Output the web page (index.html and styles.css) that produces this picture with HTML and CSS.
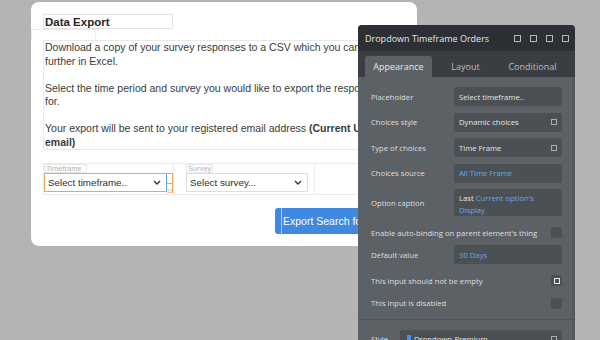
FILE: index.html
```html
<!DOCTYPE html>
<html>
<head>
<meta charset="utf-8">
<link rel="stylesheet" href="styles.css">
</head>
<body>
<div class="card">
  <div class="title-box">Data Export</div>
  <div class="ghost-box"></div>
  <div class="text-box">
    <p>Download a copy of your survey responses to a CSV which you can use further in Excel.</p>
    <p>Select the time period and survey you would like to export the responses for.</p>
    <p>Your export will be sent to your registered email address <b>(Current User's email)</b></p>
  </div>
  <div class="filters">
    <div class="col col-time">
      <div class="field-label lbl-time">Timeframe</div>
      <div class="select select-active">
        <span>Select timeframe..</span>
        <svg class="chev" width="8" height="5" viewBox="0 0 8 5"><path d="M1 1l3 3 3-3" fill="none" stroke="#333" stroke-width="1.4"/></svg>
        <span class="marker"><span class="marker-mid"></span><span class="marker-num">12</span></span>
      </div>
    </div>
    <div class="col col-survey">
      <div class="field-label lbl-survey">Survey</div>
      <div class="select select-survey">
        <span>Select survey...</span>
        <svg class="chev" width="8" height="5" viewBox="0 0 8 5"><path d="M1 1l3 3 3-3" fill="none" stroke="#333" stroke-width="1.4"/></svg>
      </div>
    </div>
    <div class="col col-rest"></div>
  </div>
  <div class="actions">
    <button class="btn"><span class="btn-text">Export Search for Responses</span></button>
  </div>
</div>

<div class="panel">
  <div class="panel-head">
    <span class="panel-title">Dropdown Timeframe Orders</span>
    <span class="head-icons"><i></i><i></i><i></i><i></i></span>
  </div>
  <div class="tabs">
    <div class="tab active">Appearance</div>
    <div class="tab">Layout</div>
    <div class="tab">Conditional</div>
  </div>
  <div class="panel-body">
    <div class="row"><span>Placeholder</span><div class="field">Select timeframe..</div></div>
    <div class="row"><span>Choices style</span><div class="field"><span>Dynamic choices</span><span class="sq"></span></div></div>
    <div class="row"><span>Type of choices</span><div class="field"><span>Time Frame</span><span class="sq"></span></div></div>
    <div class="row"><span>Choices source</span><div class="field"><span class="blue">All Time Frame</span></div></div>
    <div class="row row-caption"><span>Option caption</span><div class="field field-multi">Last <span class="blue">Current option's Display</span></div></div>
    <div class="row row-check"><span>Enable auto-binding on parent element's thing</span><span class="check"></span></div>
    <div class="row"><span>Default value</span><div class="field"><span class="blue">30 Days</span></div></div>
    <div class="row row-check"><span>This input should not be empty</span><span class="check on"><span class="check-mark"></span></span></div>
    <div class="row row-check"><span>This input is disabled</span><span class="check"></span></div>
    <div class="divider"></div>
    <div class="row row-style"><span>Style</span><div class="field field-style"><span class="style-name"><span class="style-swatch"></span>Dropdown-Premium</span><span class="sq"></span></div></div>
  </div>
</div>
</body>
</html>
```

FILE: styles.css
```css
body {
  margin: 0;
  width: 600px;
  height: 340px;
  overflow: hidden;
  background: #b4b4b4;
  position: relative;
  font-family: "Liberation Sans", Arial, sans-serif;
}

.card {
  margin: 2px 0 0 31px;
  width: 386px;
  height: 244px;
  background: #fff;
  border-radius: 8px;
  padding: 12px 0 0 12px;
  box-sizing: border-box;
  color: #3a3a3a;
}

.title-box {
  width: 130px;
  height: 15px;
  box-sizing: border-box;
  border: 1px solid #e4e4e4;
  font-size: 11.5px;
  font-weight: bold;
  color: #262626;
  line-height: 15px;
  padding-left: 1px;
}

.ghost-box {
  margin-left: -12px;
  width: 65px;
  height: 11px;
  box-sizing: border-box;
  border: 1px solid #ececec;
  border-bottom: 0;
}

.text-box {
  width: 374px;
  box-sizing: border-box;
  border: 1px solid #e8e8e8;
  border-right: 0;
  padding-left: 1px;
  font-size: 10.5px;
  line-height: 13.5px;
}

.text-box p {
  margin: 0;
  max-width: 348px;
}

.text-box p + p {
  margin-top: 13.5px;
}

.filters {
  margin-top: 13px;
  width: 374px;
  height: 32px;
  box-sizing: border-box;
  border: 1px solid #ececec;
  border-right: 0;
  display: flex;
}

.col {
  box-sizing: border-box;
  border-right: 1px solid #ececec;
}

.col-time {
  width: 130px;
}

.col-survey {
  width: 141px;
  padding-left: 12px;
}

.col-rest {
  border-right: 0;
}

.field-label {
  box-sizing: border-box;
  height: 9px;
  border: 1px solid #e8e8e8;
  font-size: 7.5px;
  line-height: 8px;
  color: #b3b3b3;
  padding-left: 1px;
}

.lbl-time {
  width: 43px;
}

.lbl-survey {
  width: 27px;
}

.select {
  position: relative;
  width: 123px;
  height: 19px;
  box-sizing: border-box;
  border: 1px solid #dedede;
  font-size: 9.8px;
  color: #2e2e2e;
  padding: 0 5px 0 3px;
  display: flex;
  align-items: center;
  justify-content: space-between;
}

.select-active {
  border-color: #eba463;
  border-right-color: #6b9fda;
}

.select-survey {
  width: 122px;
}

.marker {
  position: absolute;
  left: 122px;
  top: -1px;
  width: 5px;
  height: 19px;
  border-top: 1px solid #f0a35c;
  border-right: 1px solid #f0a35c;
}

.marker-mid {
  position: absolute;
  left: 0;
  right: 0;
  top: 9px;
  height: 1px;
  background: #f0a35c;
}

.marker-num {
  position: absolute;
  left: 0;
  bottom: -1px;
  font-size: 5px;
  line-height: 6px;
  color: #f0a35c;
}

.actions {
  margin-top: 13px;
  padding-left: 232px;
}

.btn {
  display: block;
  width: 140px;
  height: 26px;
  border: 0;
  border-radius: 3px;
  background: #4189e0;
  color: #fff;
  padding: 0 0 0 6px;
  text-align: left;
  font-family: "Liberation Sans", Arial, sans-serif;
  font-size: 10.5px;
}

.btn-text {
  display: block;
  height: 26px;
  line-height: 26px;
  border-left: 1px solid rgba(255, 255, 255, 0.55);
  padding-left: 1px;
  white-space: nowrap;
}

/* Property editor panel */
.panel {
  position: absolute;
  left: 358px;
  top: 25px;
  width: 217px;
  bottom: 0;
  background: #5c6165;
  border-radius: 4px 4px 0 0;
  font-family: "Open Sans", sans-serif;
  display: flex;
  flex-direction: column;
  overflow: hidden;
}

.panel-head {
  height: 26px;
  flex: none;
  background: #2c3034;
  display: flex;
  align-items: center;
  justify-content: space-between;
  padding: 0 6px 0 7px;
  color: #e4e5e6;
  font-size: 9px;
}

.head-icons {
  display: flex;
  gap: 9px;
}

.head-icons i {
  width: 7px;
  height: 7px;
  box-sizing: border-box;
  border: 1px solid #b4b7ba;
}

.tabs {
  height: 26px;
  flex: none;
  background: #3a3e42;
  display: flex;
  align-items: flex-end;
  padding-left: 7px;
}

.tab {
  width: 67px;
  height: 21px;
  text-align: center;
  line-height: 21px;
  font-size: 9px;
  color: #b9bdc1;
}

.tab.active {
  background: #5c6165;
  color: #e8e9ea;
  border-radius: 3px 3px 0 0;
}

.panel-body {
  flex: 1;
  padding: 10px 10px 0 13px;
  border-right: 3px solid #53585c;
  display: flex;
  flex-direction: column;
  gap: 6.5px;
}

.row {
  display: flex;
  align-items: center;
  justify-content: space-between;
  font-size: 7.7px;
  color: #dcdee0;
  white-space: nowrap;
}

.field {
  width: 108px;
  height: 19px;
  box-sizing: border-box;
  background: #4b5054;
  border-radius: 2px;
  padding: 0 5px;
  display: flex;
  align-items: center;
  justify-content: space-between;
  color: #e4e5e6;
}

.field-multi {
  display: block;
  height: 27px;
  padding-top: 3px;
  line-height: 12px;
  white-space: normal;
}

.blue {
  color: #6ea5e6;
}

.sq {
  width: 6px;
  height: 6px;
  box-sizing: border-box;
  border: 1px solid #a9adb1;
}

.row-check {
  height: 12px;
  margin-top: 4px;
}

.check {
  width: 11px;
  height: 11px;
  background: #4b5054;
  border-radius: 1px;
  display: flex;
  align-items: center;
  justify-content: center;
}

.check-mark {
  width: 6px;
  height: 6px;
  box-sizing: border-box;
  border: 1px solid #e8e8e8;
}

.divider {
  height: 1px;
  background: #50555a;
  margin: 3.5px -13px 0 -13px;
}

.row-style {
  margin-top: 3px;
}

.field-style {
  width: 162px;
  padding-left: 7px;
}

.style-name {
  display: flex;
  align-items: center;
}

.style-swatch {
  width: 4px;
  height: 8px;
  background: #4a90e2;
  margin-right: 3px;
}
```
